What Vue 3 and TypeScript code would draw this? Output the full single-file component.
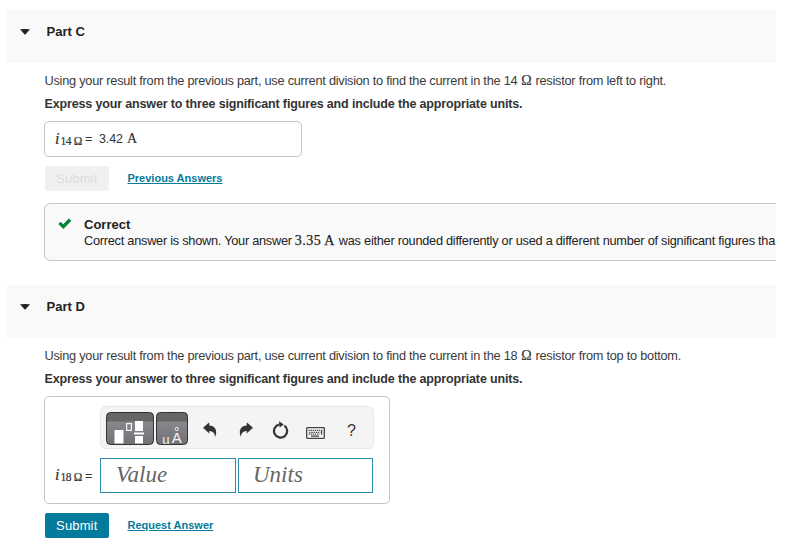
<script setup lang="ts">
interface Part {
  id: string
  title: string
  current: string
  direction: string
}

const partC: Part = { id: 'c', title: 'Part C', current: '14', direction: 'left to right.' }
const partD: Part = { id: 'd', title: 'Part D', current: '18', direction: 'top to bottom.' }
const instruction = 'Express your answer to three significant figures and include the appropriate units.'
</script>

<template>
  <main class="page">
    <section v-for="part in [partC, partD]" :key="part.id" class="part" :class="`part-${part.id}`">
      <header class="part-head">
        <svg class="caret" width="10" height="6" viewBox="0 0 10 6"><path d="M0 .3Q5-.2 10 .3L5.6 5.3Q5 5.9 4.4 5.3Z" fill="#222" /></svg>
        <h2>{{ part.title }}</h2>
      </header>
      <div class="part-body">
        <p class="question"><span>Using your result from the previous part, use current division to find the current in the {{ part.current }}</span><span class="ohm">Ω</span><span>resistor from {{ part.direction }}</span></p>
        <p class="instruction">{{ instruction }}</p>

        <template v-if="part.id === 'c'">
          <div class="answer">
            <span class="var"><i>i</i><span class="sub">14 Ω</span></span><span class="eq">=</span>
            <span class="val">3.42</span><span class="unit">A</span>
          </div>
          <div class="actions">
            <button class="submit off" disabled>Submit</button>
            <a class="link">Previous Answers</a>
          </div>
          <div class="feedback">
            <svg class="check" width="14" height="12" viewBox="0 0 14 12"><path d="M.3 6.1 2.6 3.8 5.2 6.3 10.9.5 13.4 2.7 5.4 10.9Z" fill="#078339" /></svg>
            <div class="feedback-text">
              <strong>Correct</strong>
              <p><span>Correct answer is shown. Your answer</span><span class="fm">3.35 A</span><span>was either rounded differently or used a different number of significant figures tha</span></p>
            </div>
          </div>
        </template>

        <template v-else>
          <div class="editor">
            <div class="toolbar">
              <svg class="tool-a" width="48" height="33" viewBox="0 0 48 33">
                <defs>
                  <linearGradient id="ga" x1="0" y1="0" x2="0" y2="1"><stop offset="0" stop-color="#929198" /><stop offset="1" stop-color="#717076" /></linearGradient>
                </defs>
                <rect x=".5" y=".5" width="47" height="32" rx="4" fill="url(#ga)" />
                <path d="M.5 9.5V4.5a4 4 0 0 1 4-4h39a4 4 0 0 1 4 4v5Z" fill="#666" />
                <rect x=".5" y=".5" width="47" height="32" rx="4" fill="none" stroke="#333" />
                <path d="M8.5 18h9v13.5h-9ZM29 9h8v10h-8ZM28 20.5h10v2H28ZM29 24h8v7.5h-8Z" fill="#fff" />
                <rect x="20.6" y="11.6" width="4.8" height="6.8" fill="none" stroke="#f3f3f3" stroke-width="1.2" />
              </svg>
              <svg class="tool-b" width="32" height="33" viewBox="0 0 32 33">
                <rect x=".5" y=".5" width="31" height="32" rx="4" fill="url(#ga)" />
                <path d="M.5 9.5V4.5a4 4 0 0 1 4-4h23a4 4 0 0 1 4 4v5Z" fill="#666" />
                <svg x="0" y="0" width="32" height="31.8"><text x="6.3" y="31.8" class="glyph mu">µ</text><text x="15.8" y="31" class="glyph">A</text></svg>
                <circle cx="20.8" cy="17" r="1.6" fill="none" stroke="#f3f3f3" stroke-width=".9" />
                <rect x=".5" y=".5" width="31" height="32" rx="4" fill="none" stroke="#333" />
              </svg>
              <svg class="undo" width="14" height="16" viewBox="0 0 14 16"><path d="M0 5.7 6.3 .3V3.4C11.5 3.6 15.2 8 12 15 11.8 11.2 10.3 9.3 6.3 9V11.6Z" fill="#333" /></svg>
              <svg class="redo" width="14" height="16" viewBox="0 0 14 16"><path d="M14 5.7 7.7 .3V3.4C2.5 3.6-1.2 8 2 15 2.2 11.2 3.7 9.3 7.7 9V11.6Z" fill="#333" /></svg>
              <svg class="reset" width="17" height="18" viewBox="0 0 17 18"><path d="M12.4 4.6A6.6 6.6 0 1 1 7.4 3.5" fill="none" stroke="#333" stroke-width="2.2" /><path d="M7 .2 11.8 3.4 7.6 6.6Z" fill="#333" /></svg>
              <svg class="keys" width="19" height="12" viewBox="0 0 19 12"><rect x=".7" y=".7" width="17.6" height="10.6" rx=".5" fill="#f8f8f8" stroke="#444" stroke-width="1.3" /><path d="M2.5 3.3h14M3.3 5.3h11M2.5 7.2h11" stroke="#444" stroke-width="1.2" stroke-dasharray="1.3 .8" /><path d="M5 9.2h8M15.6 4v3.7" stroke="#444" stroke-width="1.2" /></svg>
              <span class="help">?</span>
            </div>
            <div class="fields">
              <span class="var"><i>i</i><span class="sub">18 Ω</span></span><span class="eq">=</span>
              <div class="field value">Value</div>
              <div class="field units">Units</div>
            </div>
          </div>
          <div class="actions">
            <button class="submit">Submit</button>
            <a class="link">Request Answer</a>
          </div>
        </template>
      </div>
    </section>
  </main>
</template>

<style>
body { background: #fff; overflow: hidden; }
</style>

<style scoped>
.page { box-sizing: border-box; width: 776px; height: 550px; padding: 10px 0 0 7px; overflow: hidden; font-family: "Liberation Sans", Arial, sans-serif; font-size: 12.5px; color: #333; white-space: nowrap; }
.part-c { height: 275px; }
.part-head { display: flex; align-items: flex-start; box-sizing: border-box; height: 53px; padding: 14px 0 0 13px; background: #f9f9f9; }
.caret { margin-top: 5px; }
h2 { margin: 0 0 0 16.5px; font-size: 13px; line-height: 16px; color: #222; }
.part-body { padding-left: 37px; }
p { margin: 0; }
.question { display: flex; box-sizing: border-box; height: 33px; padding: 10px 0 0 .5px; font-size: 12.75px; line-height: 16px; letter-spacing: -.245px; color: #3a3a3a; }
.ohm { margin: 0 4px 0 4px; font-family: "Liberation Serif", serif; font-size: 14px; -webkit-text-stroke: .2px #333; }
.instruction { height: 25px; padding-left: .5px; line-height: 16px; font-weight: 700; letter-spacing: -.15px; }
.answer { display: flex; align-items: center; box-sizing: border-box; width: 257.5px; height: 36px; padding-left: 10px; border: 1px solid #c4c4c4; border-radius: 5px; }
.var { display: flex; width: 27px; padding-top: 3px; font-family: "Liberation Serif", serif; font-size: 16px; line-height: 18px; -webkit-text-stroke: .2px #333; }
.sub { margin-left: 1px; font-size: 11.5px; line-height: 22px; letter-spacing: -.4px; }
.eq { width: 14px; margin-left: 3px; }
.val { letter-spacing: -.1px; }
.unit { margin-left: 4px; font-family: "Liberation Serif", serif; font-size: 14px; -webkit-text-stroke: .2px #333; }
.actions { display: flex; align-items: center; margin-top: 9px; padding-left: .5px; }
.submit { width: 64.5px; height: 25px; padding: 0 0 1px; border: 0; border-radius: 2px; background: #047a9c; color: #fff; font: 13px "Liberation Sans", Arial, sans-serif; letter-spacing: .15px; }
.off { background: #f0f0f0; color: #dcdcdc; }
.link { margin: -2px 0 0 18.5px; font-size: 11px; font-weight: 700; color: #047a9c; text-decoration: underline; text-underline-offset: 1px; }
.feedback { display: flex; box-sizing: border-box; width: 760px; height: 58px; margin-top: 12px; padding: 13px 0 0 13px; border: 1px solid #c7c7c7; border-radius: 6px; background: #f9f9f9; color: #222; }
.check { flex: none; margin: 1px 12px 0 0; }
.feedback strong { display: block; font-size: 13px; line-height: 16px; }
.feedback p { display: flex; font-size: 12.75px; line-height: 16px; letter-spacing: -.252px; }
.fm { margin: 0 4px 0 3px; font-family: "Liberation Serif", serif; font-size: 14px; letter-spacing: .45px; -webkit-text-stroke: .25px #222; }
.editor { box-sizing: border-box; width: 346px; height: 108px; padding: 9px 0 0 10px; border: 1px solid #c4c4c4; border-radius: 5px; }
.toolbar { display: flex; align-items: flex-start; box-sizing: border-box; width: 274px; height: 43px; margin-left: 45px; padding: 5px 0 0 4.5px; border: 1px solid #e8e8e8; border-radius: 6px; background: #f4f4f4; }
.toolbar svg { flex: none; }
.tool-b { margin-left: 2px; }
.glyph { font: 15px "Liberation Sans", Arial, sans-serif; fill: #f3f3f3; }
.mu { font-size: 13px; }
.undo { margin: 10px 0 0 15.5px; }
.redo { margin: 10px 0 0 22px; }
.reset { margin: 9px 0 0 18.5px; }
.keys { margin: 15px 0 0 17px; }
.help { margin: 9px 0 0 22.5px; font-size: 16px; line-height: 20px; }
.fields { display: flex; align-items: center; height: 35px; margin-top: 9px; }
.field { box-sizing: border-box; width: 136px; height: 35px; padding-left: 15px; border: 1px solid #2b8daa; font: italic 23px/32px "Liberation Serif", serif; color: #666; }
.fields .eq { width: 15px; }
.units { width: 135px; margin-left: 2px; padding-left: 14px; }
</style>
